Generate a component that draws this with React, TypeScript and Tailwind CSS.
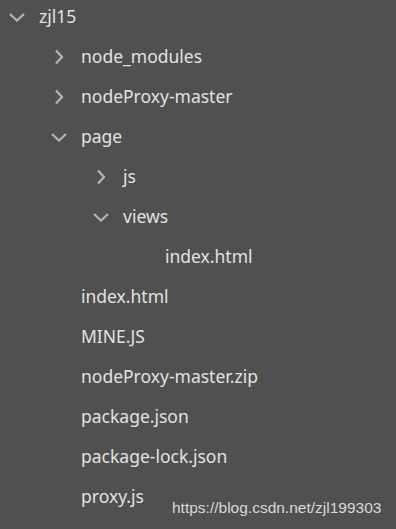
import React from "react";

type Node = { name: string; depth: number; open?: boolean; folder?: boolean };

const rows: Node[] = [
  { name: "zjl15", depth: 0, folder: true, open: true },
  { name: "node_modules", depth: 1, folder: true },
  { name: "nodeProxy-master", depth: 1, folder: true },
  { name: "page", depth: 1, folder: true, open: true },
  { name: "js", depth: 2, folder: true },
  { name: "views", depth: 2, folder: true, open: true },
  { name: "index.html", depth: 3 },
  { name: "index.html", depth: 1 },
  { name: "MINE.JS", depth: 1 },
  { name: "nodeProxy-master.zip", depth: 1 },
  { name: "package.json", depth: 1 },
  { name: "package-lock.json", depth: 1 },
  { name: "proxy.js", depth: 1 },
];

const pad = ["pl-[8px]", "pl-[50px]", "pl-[92px]", "pl-[134px]"];

function Chevron({ open }: { open?: boolean }) {
  return (
    <svg width="18" height="18" viewBox="0 0 18 18" className="shrink-0">
      {open ? (
        <path d="M2 6 L9 12.5 L16 6" fill="none" stroke="#b4b4b4" strokeWidth="2.2" />
      ) : (
        <path d="M6 2.5 L12 9 L6 15.5" fill="none" stroke="#b4b4b4" strokeWidth="2.2" />
      )}
    </svg>
  );
}

export default function App() {
  return (
    <div
      className="relative w-[396px] h-[529px] overflow-hidden bg-[#505050]"
      style={{ fontFamily: '"Noto Sans", "Open Sans", sans-serif' }}
    >
      <div className="-mt-[3px]">
        {rows.map((r, i) => (
          <div key={i} className={`h-[40px] flex items-center ${pad[r.depth]}`}>
            <span className="w-[31px] flex items-center">
              {r.folder && <Chevron open={r.open} />}
            </span>
            <span className="text-[17.5px] text-[#e2e2e2] leading-none -mt-[1px]">{r.name}</span>
          </div>
        ))}
      </div>
      <div
        className="absolute left-[172px] top-[500px] text-[15.5px] text-[#d8d8d8] leading-none"
        style={{ fontFamily: '"Liberation Sans", Arial, sans-serif' }}
      >
        https://blog.csdn.net/zjl199303
      </div>
    </div>
  );
}
